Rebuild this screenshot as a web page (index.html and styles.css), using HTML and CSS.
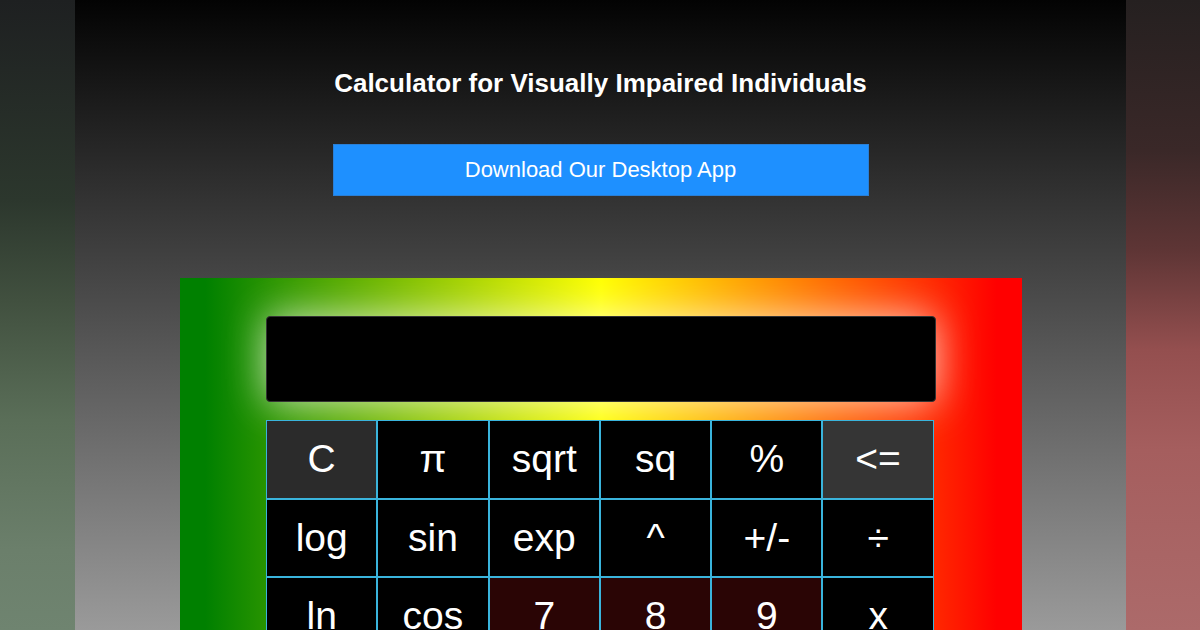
FILE: index.html
```html
<!DOCTYPE html>
<html lang="en">
<head>
<meta charset="utf-8">
<title>Calculator for Visually Impaired Individuals</title>
<link rel="stylesheet" href="styles.css">
</head>
<body>
<div class="side side-left"></div>
<main class="page">
  <h1 class="title">Calculator for Visually Impaired Individuals</h1>
  <a class="download" href="#">Download Our Desktop App</a>
  <section class="calc">
    <div class="display"></div>
    <div class="keypad">
      <button class="key key-clear">C</button>
      <button class="key">π</button>
      <button class="key">sqrt</button>
      <button class="key">sq</button>
      <button class="key">%</button>
      <button class="key key-back">&lt;=</button>
      <button class="key">log</button>
      <button class="key">sin</button>
      <button class="key">exp</button>
      <button class="key">^</button>
      <button class="key">+/-</button>
      <button class="key">÷</button>
      <button class="key">ln</button>
      <button class="key">cos</button>
      <button class="key key-num">7</button>
      <button class="key key-num">8</button>
      <button class="key key-num">9</button>
      <button class="key">x</button>
    </div>
  </section>
</main>
<div class="side side-right"></div>
</body>
</html>
```
FILE: styles.css
```css
html, body {
  margin: 0;
  height: 630px;
  overflow: hidden;
}
body {
  display: flex;
  font-family: "Liberation Sans", Arial, sans-serif;
  background: #000;
}
.side {
  width: 75px;
  flex: none;
}
.side-left {
  background: linear-gradient(#1e2021 0, #2c372d 200px, #41503f 300px, #5a6e58 420px, #6b7f6b 550px, #6f8470 630px);
}
.side-right {
  width: 74px;
  background: linear-gradient(#252020 0, #3a2828 150px, #5e3535 250px, #944f4f 350px, #a55e5e 450px, #ac6a6a 630px);
}
.page {
  flex: 1;
  display: flex;
  flex-direction: column;
  align-items: center;
  background: linear-gradient(#030303 0, #9a9a9a 630px);
}
.page > * {
  flex: none;
}
.title {
  margin: 68px 0 0;
  color: #fff;
  font-size: 26px;
  font-weight: bold;
  line-height: 30px;
  text-shadow: 0 0 1px rgba(0, 0, 0, 0.6);
}
.download {
  margin-top: 46px;
  width: 536px;
  height: 52px;
  box-sizing: border-box;
  display: flex;
  align-items: center;
  justify-content: center;
  background: #1e90ff;
  border: 1px solid #2a7fd6;
  color: #fff;
  font-size: 22px;
  text-decoration: none;
}
.calc {
  margin-top: 82px;
  margin-left: 1px;
  width: 842px;
  box-sizing: border-box;
  padding: 38px 86px 0;
  height: 360px;
  background: linear-gradient(to right, #008000 3%, #ffff00 50%, #ff0000 97%);
}
.display {
  height: 86px;
  box-sizing: border-box;
  background: #000;
  border: 1px solid #333;
  border-radius: 4px;
  box-shadow: 0 0 40px rgba(255, 255, 255, 0.75);
}
.keypad {
  margin-top: 18px;
  width: 668px;
  display: grid;
  grid-template-columns: repeat(6, 109.3px);
  grid-auto-rows: 76.5px;
  gap: 2px;
  padding: 1px;
  box-sizing: border-box;
  background: #3ab4dc;
}
.key {
  border: 0;
  padding: 0;
  margin: 0;
  background: #000;
  color: #fff;
  font-family: "Liberation Sans", Arial, sans-serif;
  font-size: 39px;
}
.key-clear { background: #2b2b2b; }
.key-back { background: #353535; }
.key-num { background: #2a0505; }
```
